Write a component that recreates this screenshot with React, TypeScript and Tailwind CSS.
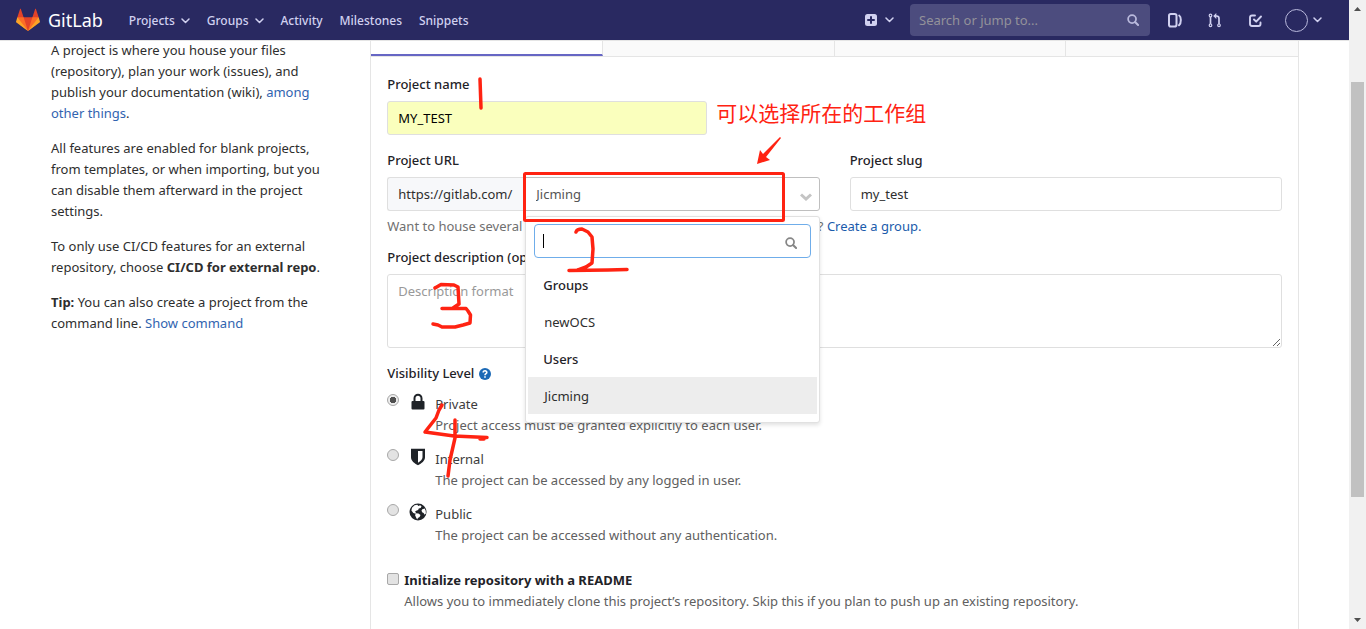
import React from 'react';

// --- Data ---
const navLinks = [
    { label: 'Projects', menu: true },
    { label: 'Groups', menu: true },
    { label: 'Activity', menu: false },
    { label: 'Milestones', menu: false },
    { label: 'Snippets', menu: false },
];

const visibilityLevels = [
    { id: 'private', label: 'Private', help: 'Project access must be granted explicitly to each user.', Icon: LockIcon },
    { id: 'internal', label: 'Internal', help: 'The project can be accessed by any logged in user.', Icon: ShieldIcon },
    { id: 'public', label: 'Public', help: 'The project can be accessed without any authentication.', Icon: EarthIcon },
];

// --- Icons ---
function TanukiLogo() {
    return (
        <svg width="24" height="24" viewBox="0 0 36 36" aria-hidden="true">
            <path fill="#e24329" d="M2 14l9.38 9v-9l-4-12.28c-.205-.632-1.176-.632-1.38 0z" />
            <path fill="#e24329" d="M34 14l-9.38 9v-9l4-12.28c.205-.632 1.176-.632 1.38 0z" />
            <path fill="#e24329" d="M18 34.38 3 14 33 14z" />
            <path fill="#fc6d26" d="M18 34.38 11.38 14 2 14 6 25z" />
            <path fill="#fc6d26" d="M18 34.38 24.62 14 34 14 30 25z" />
            <path fill="#fca326" d="M2 14 .1 20.16c-.18.565 0 1.2.5 1.56l17.42 12.66z" />
            <path fill="#fca326" d="M34 14l1.9 6.16c.18.565 0 1.2-.5 1.56L18 34.38z" />
        </svg>
    );
}

function Chevron() {
    return (
        <svg width="9" height="6" viewBox="0 0 9 6" fill="none" stroke="currentColor" strokeWidth="1.5" strokeLinecap="round" strokeLinejoin="round" aria-hidden="true">
            <path d="M1 1l3.500 3.500L8 1" />
        </svg>
    );
}

function PlusSquare() {
    return (
        <svg width="12" height="12" viewBox="0 0 12 12" aria-hidden="true">
            <rect width="12" height="12" rx="2.500" fill="currentColor" />
            <path d="M6 3v6M3 6h6" stroke="#292961" strokeWidth="2" strokeLinecap="round" />
        </svg>
    );
}

function SearchIcon() {
    return (
        <svg width="12" height="12" viewBox="0 0 13 13" fill="none" stroke="currentColor" strokeLinecap="round" aria-hidden="true">
            <circle cx="5.500" cy="5.500" r="4.300" strokeWidth="1.900" />
            <path d="M9 9l3 3" strokeWidth="2.200" />
        </svg>
    );
}

function IssuesIcon() {
    return (
        <svg width="14" height="15" viewBox="0 0 14 15" fill="none" stroke="currentColor" strokeLinecap="round" aria-hidden="true">
            <rect x="1" y="1" width="7.500" height="12.500" rx="1.800" strokeWidth="2" />
            <path d="M11.200 2.500c2 1.300 2.400 7.300-.2 9.800" strokeWidth="2" />
        </svg>
    );
}

function MergeIcon() {
    return (
        <svg width="14" height="15" viewBox="0 0 14 15" fill="none" stroke="currentColor" aria-hidden="true">
            <circle cx="2.500" cy="2.500" r="1.300" strokeWidth="1.200" />
            <circle cx="2.500" cy="12.300" r="1.300" strokeWidth="1.200" />
            <circle cx="11" cy="12.300" r="1.300" strokeWidth="1.200" />
            <path d="M2.500 4v7M11 11V5.500Q11 3 8.500 3H7.500" strokeWidth="1.700" />
            <path d="M8.300 0v6L5.200 3z" fill="currentColor" stroke="none" />
        </svg>
    );
}

function TodoIcon() {
    return (
        <svg width="13" height="13" viewBox="0 0 13 13" fill="none" stroke="currentColor" strokeWidth="1.900" strokeLinecap="round" strokeLinejoin="round" aria-hidden="true">
            <path d="M6 1.500H3Q1 1.500 1 3.500v6.300Q1 12 3 12h6.500q2 0 2-2V8.500" />
            <path d="M5 5.500L7.200 7.700 12 2.500" />
        </svg>
    );
}

function LockIcon() {
    return (
        <svg width="18" height="18" viewBox="0 0 18 18" aria-hidden="true">
            <path d="M5.500 8V5.200a3.500 3.500 0 017 0V8" fill="none" stroke="#1f2328" strokeWidth="2" />
            <rect x="2.500" y="8" width="13" height="8.500" rx="1" fill="#1f2328" />
        </svg>
    );
}

function ShieldIcon() {
    return (
        <svg width="18" height="18" viewBox="0 0 18 18" aria-hidden="true">
            <path fillRule="evenodd" fill="#1f2328" d="M2 .800h14v8.500c0 3.500-3.400 6.200-7 7.900-3.600-1.700-7-4.400-7-7.900zM9 3v11.700c2.500-1.400 4.500-3.300 4.500-5.400V3z" />
        </svg>
    );
}

function EarthIcon() {
    return (
        <svg width="18" height="18" viewBox="0 0 18 18" aria-hidden="true">
            <circle cx="9" cy="9" r="8.500" fill="#1f2328" />
            <path fill="#fff" d="M3 4.800L5.600 2.300 8.200 1.800l1.300 1.100 1.600-.6 1.400.9-.8 1.700-1.900.6-.7 1.500-1.900.8-1.400 1.300 1.300.5-.5 1.200-2.300-.9-1.900-2.300z" />
            <path fill="#fff" d="M6.800 10.200l2.700.3 2 1.500-.9 1.900-1.700 1.200-.7 1.500-1-1.900-1.100-2.500zM13.300 6.300l2.400-.8 1 2.300.2 2.600-1.300 1.300-1-1.800-1.500-.7-.6-1.600z" />
        </svg>
    );
}

function HelpIcon() {
    return (
        <svg width="12" height="12" viewBox="0 0 12 12" fill="none" aria-hidden="true">
            <circle cx="6" cy="6" r="6" fill="#1b69b6" />
            <path d="M4.200 4.500c.1-2.400 3.700-2.100 3.600 0C7.800 5.700 6 5.600 6 7.200" stroke="#fff" strokeWidth="1.600" />
            <path d="M5.200 8.300h1.600v1.500H5.200z" fill="#fff" />
        </svg>
    );
}

// --- Navbar ---
function Navbar() {
    return (
        <header className="relative z-10 flex h-10 items-center justify-between bg-[#292961] pl-4 pr-[27px] text-[#d1d1f0] shadow-[0_1px_0_#e5e5e5]">
            <div className="flex items-center">
                <a href="#" className="flex items-center gap-2 text-lg text-white">
                    <TanukiLogo />
                    GitLab
                </a>
                <nav className="ml-[26px] flex items-center gap-[17px] pt-[2px] text-xs font-medium">
                    {navLinks.map((link) => (
                        <a key={link.label} href="#" className="flex items-center gap-[6px]">
                            {link.label}
                            {link.menu && <Chevron />}
                        </a>
                    ))}
                </nav>
            </div>

            <div className="flex items-center">
                <button aria-label="New" className="mr-4 flex items-center gap-2">
                    <PlusSquare />
                    <Chevron />
                </button>
                <div className="relative mr-[5px]">
                    <input aria-label="Search" placeholder="Search or jump to..." className="h-8 w-[240px] rounded bg-[#4c4c7e] pl-[9px] pr-8 text-[13px] outline-none placeholder:text-[#93929a]" />
                    <span className="absolute right-[11px] top-[10px] text-[#b9b9dc]"><SearchIcon /></span>
                </div>
                <a href="#" aria-label="Issues" className="flex w-10 justify-center"><IssuesIcon /></a>
                <a href="#" aria-label="Merge requests" className="flex w-10 justify-center"><MergeIcon /></a>
                <a href="#" aria-label="Todos" className="flex w-10 justify-center"><TodoIcon /></a>
                <button aria-label="Account" className="ml-[10px] flex items-center gap-[5px]">
                    <span className="size-[23px] rounded-full border border-[#b9b9dc]" />
                    <Chevron />
                </button>
            </div>
        </header>
    );
}

// --- Left column ---
function HelpText() {
    return (
        <aside className="col-span-3 flex flex-col gap-[14px] px-[17px]">
            <p>
                A project is where you house your files (repository), plan your work (issues), and publish your
                documentation (wiki), <a href="#" className="text-[#3164b0]">among other things</a>.
            </p>
            <p>
                All features are enabled for blank projects, from templates, or when importing, but you can disable
                them afterward in the project settings.
            </p>
            <p>
                To only use CI/CD features for an external repository, choose <strong>CI/CD for external repo</strong>.
            </p>
            <p>
                <strong>Tip:</strong> You can also create a project from the command line.{' '}
                <a href="#" className="text-[#3164b0]">Show command</a>
            </p>
        </aside>
    );
}

// --- Namespace menu under the URL field ---
function NamespaceMenu() {
    return (
        <div className="absolute left-0 right-0 top-[39px] z-10 rounded-[3px] border border-[#e1e1e1] bg-white px-[2px] py-2 shadow-[0_2px_4px_rgba(0,0,0,0.12)]">
            <div className="relative mx-[6px] mb-2 -mt-px">
                <input aria-label="Search namespaces" className="h-[34px] w-full rounded border border-[#6fadea] px-2 outline-none" />
                <span className="absolute left-[9px] top-[10px] h-[14px] w-px bg-black" />
                <span className="absolute right-[14px] top-[13px] text-[#868686]"><SearchIcon /></span>
            </div>
            <ul role="listbox" aria-label="Namespaces" className="leading-[38px]">
                <li className="h-[37px] px-[15px] font-medium text-[#1f2328]">Groups</li>
                <li role="option" aria-selected="false" className="h-[37px] px-4">newOCS</li>
                <li className="h-[37px] px-[15px] font-medium text-[#1f2328]">Users</li>
                <li role="option" aria-selected="true" className="h-[37px] bg-[#ededed] px-4">Jicming</li>
            </ul>
        </div>
    );
}

// --- Red marker notes over the form ---
function MarkerNotes() {
    return (
        <div className="pointer-events-none absolute left-0 top-0 z-20">
            <svg width="560" height="480" viewBox="371 40 560 480" fill="none" stroke="#ff2312" strokeWidth="3.500" strokeLinecap="round" strokeLinejoin="round" aria-hidden="true">
                <path d="M480 79L481 108" />
                <path d="M576 232Q577 229 582 229L588 232 592 237 593 249 592 263 586 267 578 270M569 270.500L608 270 627 269.500" />
                <path d="M435 288L441 284.500 454 285 458 287 459 304 453 308M442 308.500L466 308.500 468 311 470.500 315 470 323 463 325 455 327 442 327 438 325 433 324" />
                <path d="M442 405L439 410 436 418 425 432 454 436 487 437.500M480 439L484 439M455 420L455 438 450 460 448 476" />
                <rect x="524.500" y="173.500" width="259" height="47" rx="1" strokeWidth="3" />
                <path d="M757 164L760 150 763 154 780 137 781 138 766 157 770 160z" fill="#ff2312" stroke="none" />
            </svg>
            <p className="absolute left-[345px] top-[57px] whitespace-nowrap font-['Noto_Sans_CJK_SC',sans-serif] text-[21px] leading-[30px] text-[#ff2312]">可以选择所在的工作组</p>
        </div>
    );
}

const labelClass = 'mb-[6px] block font-medium text-[#1f2328]';
const inputClass = 'h-[34px] rounded-[3px] border border-[#dfdfdf] px-[10px] outline-none';

function ProjectForm() {
    return (
        <form className="px-4 pt-[17px]">
            <div className="mb-[15px]">
                <label htmlFor="name" className={labelClass}>Project name</label>
                <input id="name" defaultValue="MY_TEST" className={`${inputClass} w-[320px] bg-[#faffbd] text-black`} />
            </div>

            <div className="grid grid-cols-2 gap-[30px]">
                <div>
                    <label htmlFor="namespace" className={labelClass}>Project URL</label>
                    <div className="flex">
                        <span className="flex h-[34px] w-[138px] items-center rounded-l-[3px] border border-r-0 border-[#dfdfdf] bg-[#f7f8fa] px-[10px]">https://gitlab.com/</span>
                        <div className="relative flex-1">
                            <select id="namespace" defaultValue="Jicming" className="h-[34px] w-full appearance-none rounded-r-[3px] border border-[#bfbfbf] bg-white px-[10px] text-[#555] outline-none">
                                <option>Jicming</option>
                                <option>newOCS</option>
                            </select>
                            <svg width="12" height="8" viewBox="0 0 12 8" className="absolute right-2 top-[16px]" fill="none" stroke="#c4c4c4" strokeWidth="3" aria-hidden="true">
                                <path d="M1 1.500l5 4.500 5-4.500" />
                            </svg>
                            <NamespaceMenu />
                        </div>
                    </div>
                </div>
                <div>
                    <label htmlFor="slug" className={labelClass}>Project slug</label>
                    <input id="slug" defaultValue="my_test" className={`${inputClass} w-full`} />
                </div>
            </div>
            <p className="mb-[10px] mt-[5px] text-[#707070]">
                Want to house several dependent projects under the same namespace?{' '}
                <a href="#" className="text-[#1b5cac]">Create a group.</a>
            </p>

            <div className="mb-[15px]">
                <label htmlFor="description" className={labelClass}>Project description (optional)</label>
                <textarea id="description" placeholder="Description format" className="block h-[74px] w-full rounded-[3px] border border-[#dfdfdf] px-[10px] py-[6px] outline-none placeholder:text-[#999]" />
            </div>

            <fieldset>
                <legend className="mb-[10px] flex items-center gap-[5px] font-medium text-[#1f2328]">
                    Visibility Level
                    <a href="#" aria-label="Help"><HelpIcon /></a>
                </legend>
                <div className="flex flex-col gap-[13px]">
                    {visibilityLevels.map(({ id, label, help, Icon }) => (
                        <div key={id} className="flex items-start">
                            <input
                                type="radio"
                                id={id}
                                name="visibility"
                                defaultChecked={id === 'private'}
                                className="size-3 appearance-none rounded-full border border-[#a8a8a8] bg-[#e3e3e3] checked:bg-[radial-gradient(circle,#4f4f4f_0_3px,#ececec_3px)]"
                            />
                            <span className="ml-[10px] mr-2 -mt-px"><Icon /></span>
                            <div>
                                <label htmlFor={id} className="block text-[#3c3c3c]">{label}</label>
                                <p className="text-[#606060]">{help}</p>
                            </div>
                        </div>
                    ))}
                </div>
            </fieldset>

            <div className="mt-6 flex items-start gap-[5px]">
                <input type="checkbox" id="readme" className="mt-[3px] size-3 appearance-none rounded-[2px] border border-[#a8a8a8] bg-[#e3e3e3]" />
                <div>
                    <label htmlFor="readme" className="block font-bold text-[#1f2328]">Initialize repository with a README</label>
                    <p className="text-[#606060]">Allows you to immediately clone this project’s repository. Skip this if you plan to push up an existing repository.</p>
                </div>
            </div>
        </form>
    );
}

function Scrollbar() {
    return (
        <div className="flex w-[17px] shrink-0 flex-col items-center bg-[#f1f1f1]" aria-hidden="true">
            <svg width="17" height="17" viewBox="0 0 17 17"><path d="M5 11h7L8.500 7z" fill="#505050" /></svg>
            <div className="flex-[65]" />
            <div className="w-[13px] flex-[415] bg-[#c1c1c1]" />
            <div className="flex-[115]" />
            <svg width="17" height="17" viewBox="0 0 17 17"><path d="M5 6h7l-3.500 4z" fill="#505050" /></svg>
        </div>
    );
}

export default function App() {
    return (
        <div className="flex min-h-screen bg-white font-['Noto_Sans',sans-serif] text-[13px] leading-[21px] text-[#2e2e2e]">
            <div className="flex min-w-0 flex-1 flex-col">
                <Navbar />
                <div className="mx-auto grid w-full max-w-[1281px] flex-1 grid-cols-12">
                    <HelpText />
                    <div className="col-span-9 px-4">
                        <main className="relative h-full border-x border-[#e5e5e5]">
                            {/* bottom edge of the tab row */}
                            <div className="grid h-[17px] grid-cols-4 divide-x divide-[#e5e5e5] border-b border-[#e5e5e5] bg-[#fafafa]">
                                <div className="border-b-2 border-b-[#6666c4] bg-white" />
                                <div />
                                <div />
                                <div />
                            </div>
                            <ProjectForm />
                            <MarkerNotes />
                        </main>
                    </div>
                </div>
            </div>
            <Scrollbar />
        </div>
    );
}
